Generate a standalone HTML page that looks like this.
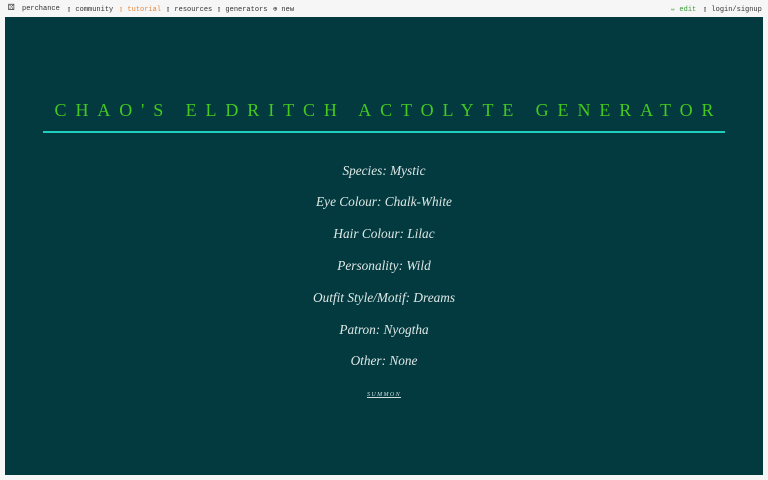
<!DOCTYPE html>
<html><head><meta charset="utf-8"><style>
html,body{margin:0;padding:0;width:768px;height:480px;overflow:hidden;background:#f6f6f6}
.bar{position:absolute;top:0;left:0;width:768px;height:17px;font:7px "Liberation Mono",monospace;color:#333}
.bar span{position:absolute;top:5px;white-space:nowrap}
.panel{position:absolute;left:5px;top:17px;width:758px;height:458px;background:#023a3f}
.title{position:absolute;top:100px;left:0;width:768px;text-align:center;font:18px "Liberation Serif",serif;color:#45c81f;letter-spacing:8.9px;text-indent:9px;white-space:nowrap}
.line{position:absolute;left:43px;top:131px;width:682px;height:2px;background:#1fcfbd}
.it{position:absolute;left:0;width:768px;text-align:center;font:italic 13.3px "Liberation Serif",serif;color:#dfe8e6}
.sum{position:absolute;left:0;width:768px;top:392px;text-align:center;font:italic 6px "Liberation Serif",serif;color:#cfdede;letter-spacing:1.4px}
.sum u{text-decoration:underline}
</style></head><body>
<div class="bar">
<span style="left:8px;font-size:11px;top:0px">⚄</span>
<span style="left:22px">perchance</span>
<span style="left:67px">▯ community</span>
<span style="left:119px;color:#e8883a">▯ tutorial</span>
<span style="left:166px">▯ resources</span>
<span style="left:217px">▯ generators</span>
<span style="left:273px">⊕ new</span>
<span style="left:671px;color:#3a9a3a">✏ edit</span>
<span style="left:703px">▯ login/signup</span>
</div>
<div class="panel"></div>
<div class="title">CHAO'S ELDRITCH ACTOLYTE GENERATOR</div>
<div class="line"></div>
<div class="it" style="top:163px">Species: Mystic</div>
<div class="it" style="top:194px">Eye Colour: Chalk-White</div>
<div class="it" style="top:226px">Hair Colour: Lilac</div>
<div class="it" style="top:258px">Personality: Wild</div>
<div class="it" style="top:290px">Outfit Style/Motif: Dreams</div>
<div class="it" style="top:322px">Patron: Nyogtha</div>
<div class="it" style="top:353px">Other: None</div>
<div class="sum"><u>SUMMON</u></div>
</body></html>
